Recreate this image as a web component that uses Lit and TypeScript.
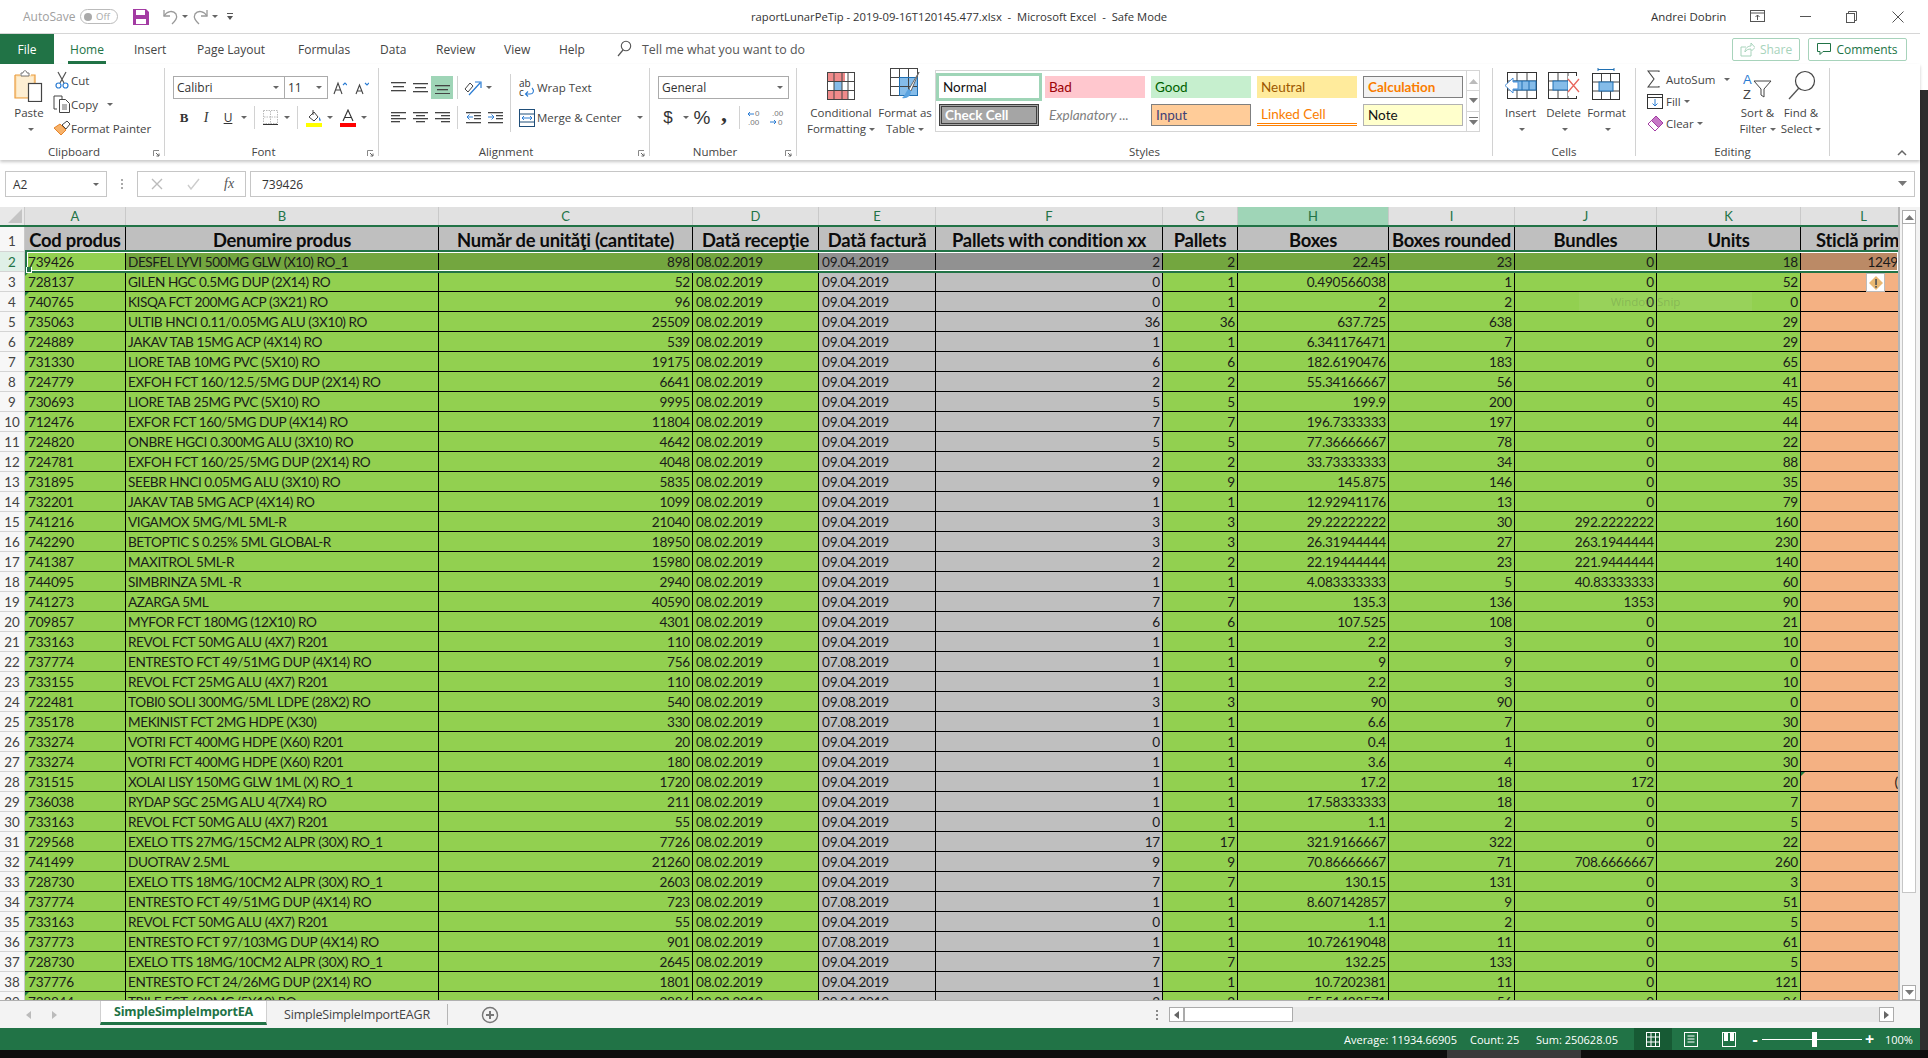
import { LitElement, html, css, svg } from "lit";
import { customElement } from "lit/decorators.js";

const ic = (w: number, h: number, body: unknown) =>
  html`<svg width=${w} height=${h} viewBox="0 0 ${w} ${h}" fill="none">${body}</svg>`;

const D = "#444";
const lines = (a: number[][]) =>
  a.map(([x1, x2, y]) => svg`<rect x=${x1} y=${y} width=${x2 - x1} height="1.3" fill=${D}/>`);

const I = {
  save: ic(18, 18, svg`<path d="M1 1h13l3 3v13H1z" fill="#a33ba3"/><rect x="4" y="2" width="9" height="5" fill="#fff"/><rect x="4" y="11" width="10" height="5" fill="#fff"/>`),
  undo: ic(17, 18, svg`<path d="M2 2v6h6" stroke="#999" stroke-width="1.3"/><path d="M2 8c3-5 9-6 12-2 2 4-1 7-4 10" stroke="#999" stroke-width="1.3"/>`),
  redo: ic(17, 18, svg`<path d="M15 2v6H9" stroke="#999" stroke-width="1.3"/><path d="M15 8C12 3 6 2 3 6c-2 4 1 7 4 10" stroke="#999" stroke-width="1.3"/>`),
  qat: ic(8, 10, svg`<rect x="1" y="1" width="6" height="1" fill="#555"/><path d="M1 4h6L4 8z" fill="#555"/>`),
  search: ic(16, 18, svg`<circle cx="10" cy="6" r="4.7" stroke="#555" stroke-width="1.1"/><path d="M7 10l-5 6" stroke="#555" stroke-width="1.2"/>`),
  display: ic(15, 13, svg`<rect x=".5" y=".5" width="14" height="11" stroke="#555"/><path d="M1 3h13" stroke="#555"/><path d="M7.5 10V5M5.5 7l2-2 2 2" stroke="#555"/>`),
  min: ic(11, 11, svg`<path d="M0 5.5h11" stroke="#555"/>`),
  restore: ic(11, 12, svg`<rect x=".5" y="2.5" width="8" height="9" stroke="#555"/><path d="M2.5 2.5v-2h8v9h-2" stroke="#555"/>`),
  close: ic(12, 12, svg`<path d="M.5.5l11 11M11.5.5l-11 11" stroke="#555"/>`),
  share: ic(15, 15, svg`<path d="M1 5h5M1 5v9h10v-4" stroke="#a7d3bb"/><path d="M5 10c0-4 3-6 6-6V1l4 4.500-4 4V7c-3 0-5 1-6 3z" stroke="#a7d3bb"/>`),
  comment: ic(14, 13, svg`<path d="M.5.5h13v8H6l-3 3v-3H.5z" stroke="#217346"/>`),
  paste: ic(30, 32, svg`<path d="M1 5h5M17 5h4v23H1V5" stroke="#ea9b3c" stroke-width="1.2" fill="#fde3b8"/><rect x="3" y="7" width="16" height="20" fill="#fdeed2"/><path d="M7 6V3h2c0-3 4-3 4 0h2v3z" fill="#fff" stroke="#777"/><rect x="14.500" y="13.500" width="13" height="18" fill="#fff" stroke="#444" stroke-width="1.2"/>`),
  cut: ic(14, 18, svg`<path d="M3 1l6 11M11 1L5 12" stroke="#555" stroke-width="1.2"/><circle cx="3.500" cy="14.500" r="2.500" stroke="#2b7cd3" stroke-width="1.2"/><circle cx="10.500" cy="14.500" r="2.500" stroke="#2b7cd3" stroke-width="1.2"/>`),
  copy: ic(18, 18, svg`<path d="M4 14H1V1h8v3" stroke="#444"/><path d="M6.500 4.500h6l4 4v9h-10z" fill="#fff" stroke="#444"/><path d="M9 10h5M9 12h5M9 14h5" stroke="#666"/>`),
  painter: ic(18, 16, svg`<path d="M1 8l6-4 6 6-5 5z" fill="#f7b26a" stroke="#e5842a"/><path d="M9 5l5-4 3 3-4 5z" fill="#fff" stroke="#444"/>`),
  grow: ic(14, 14, svg`<path d="M1 13L5 2l4 11M2.500 9h5" stroke="#444" stroke-width="1.1"/><path d="M10 4l2-2 2 2" stroke="#2b7cd3" stroke-width="1.1"/>`),
  shrink: ic(14, 14, svg`<path d="M1 13L4.500 4 8 13M2.500 10h4" stroke="#444" stroke-width="1.1"/><path d="M10 2l2 2 2-2" stroke="#2b7cd3" stroke-width="1.1"/>`),
  border: ic(16, 16, svg`<rect x=".5" y=".5" width="14" height="13" stroke="#bbb" stroke-dasharray="1.500 1"/><path d="M7.500 1v13M1 7h14" stroke="#bbb" stroke-dasharray="1.500 1"/><path d="M0 14.500h15" stroke="#333"/>`),
  fill: ic(16, 18, svg`<path d="M3 8l5-5 4 5-4 4z" fill="#fff" stroke="#444"/><path d="M7 1v5" stroke="#444"/><path d="M13 8c2 2 2 4 1 4s-1-2-1-4z" fill="#2b7cd3"/><rect y="14" width="16" height="4" fill="#ffff00"/>`),
  fontc: ic(16, 18, svg`<path d="M3 12L8 1l5 11M5 8.500h6" stroke="#333" stroke-width="1.1"/><rect y="14" width="16" height="4" fill="#ff0000"/>`),
  at: ic(15, 13, svg`${lines([[0, 15, 1], [2, 13, 5], [0, 15, 9]])}`),
  am: ic(15, 13, svg`${lines([[0, 15, 2], [2, 13, 6], [0, 15, 10]])}`),
  ab: ic(15, 13, svg`${lines([[0, 15, 4], [2, 13, 8], [0, 15, 12]])}`),
  orient: ic(18, 16, svg`<path d="M1 9l5-6 3 3-5 6z" stroke="#444"/><path d="M5 15L16 3M11 2h6v6" stroke="#2b7cd3" stroke-width="1.2"/>`),
  al: ic(15, 13, svg`${lines([[0, 15, 1], [0, 9, 4], [0, 15, 7], [0, 9, 10]])}`),
  ac: ic(15, 13, svg`${lines([[0, 15, 1], [3, 12, 4], [0, 15, 7], [3, 12, 10]])}`),
  ar: ic(15, 13, svg`${lines([[0, 15, 1], [6, 15, 4], [0, 15, 7], [6, 15, 10]])}`),
  ind1: ic(15, 13, svg`${lines([[0, 15, 1], [8, 15, 4], [8, 15, 7], [0, 15, 11]])}<path d="M7 6H1M3.500 3.500L1 6l2.500 2.500" stroke="#2b7cd3"/>`),
  ind2: ic(15, 13, svg`${lines([[0, 15, 1], [8, 15, 4], [8, 15, 7], [0, 15, 11]])}<path d="M0 6h6M3.500 3.500L6 6 3.500 8.500" stroke="#2b7cd3"/>`),
  wrapi: ic(16, 18, svg`<text x="0" y="8" font-size="10" fill="#333" font-family="Open Sans">ab</text><text x="0" y="17" font-size="10" fill="#333" font-family="Open Sans">c</text><path d="M13 9c3 3 1 6-2 6H7M9 12.500L6.500 15 9 17.500" stroke="#2b7cd3" stroke-width="1.1"/>`),
  merge: ic(16, 18, svg`<rect x=".5" y=".5" width="15" height="17" stroke="#1f4e79"/><path d="M1 5h14M1 13h14" stroke="#1f4e79"/><path d="M3 9h10M5 7L3 9l2 2M11 7l2 2-2 2" stroke="#2b7cd3"/>`),
  incd: ic(16, 18, svg`<path d="M7 5H1M3 3L1 5l2 2" stroke="#2b7cd3"/><text x="8" y="7" font-size="8" fill="#777" font-family="Liberation Sans">0</text><text x="1" y="16" font-size="8" fill="#777" font-family="Liberation Sans">.00</text>`),
  decd: ic(16, 18, svg`<text x="3" y="7" font-size="8" fill="#777" font-family="Liberation Sans">.00</text><path d="M1 13h6M5 11l2 2-2 2" stroke="#2b7cd3"/><text x="9" y="16" font-size="8" fill="#777" font-family="Liberation Sans">0</text>`),
  cond: ic(28, 28, svg`<rect x=".5" y=".5" width="27" height="27" stroke="#444" fill="#fff"/><rect x="1" y="1" width="17" height="8" fill="#f08a8a"/><rect x="1" y="19" width="20" height="8" fill="#f08a8a"/><rect x="7" y="10" width="8" height="8" fill="#85bce9"/><path d="M1 9.500h26M1 18.500h26M7 1v26M15 1v26M21 1v26" stroke="#444"/>`),
  table: ic(30, 32, svg`<rect x=".5" y=".5" width="27" height="27" stroke="#444" fill="#fff"/><rect x="9" y="9" width="18" height="18" fill="#85bce9"/><path d="M1 9.500h26M1 18.500h26M9.500 1v26M18.500 1v26" stroke="#444"/><rect x="9.500" y="9.500" width="18" height="18" stroke="#1f6fb2"/><path d="M29 4L19 21l2 2z" fill="#fff" stroke="#666"/><path d="M19 21c-3 1-3 6-7 9 5 1 9-2 9-7z" fill="#5ba3e0"/>`),
  insert: ic(33, 28, svg`<rect x="3.500" y=".5" width="29" height="26" fill="#fff" stroke="#333"/><path d="M13 1v26M23 1v26M4 9h28M4 18h28" stroke="#444"/><rect x="8" y="9" width="24" height="9" fill="#85bce9" stroke="#1f6fb2"/><path d="M18 9v9M25 9v9" stroke="#1f6fb2"/><path d="M9 6l-8 7.500 8 7.500v-4h5v-7H9z" fill="#fff" stroke="#4a90d9"/>`),
  del: ic(32, 28, svg`<rect x=".5" y=".5" width="28" height="26" fill="#fff" stroke="#333"/><path d="M10 1v26M20 1v26M1 9h28M1 18h28" stroke="#444"/><rect x="5" y="9" width="15" height="9" fill="#85bce9" stroke="#1f6fb2"/><rect x="20" y="4" width="12" height="20" fill="#fff"/><path d="M20 7l11 13M31 7L20 20" stroke="#e8685f" stroke-width="1.3"/>`),
  format: ic(29, 32, svg`<path d="M6 1.500h16M6 0v3M22 0v3" stroke="#1f6fb2"/><rect x=".5" y="5.500" width="27" height="26" fill="#fff" stroke="#333"/><path d="M9.500 6v25M18.500 6v25M1 14h27M1 23h27" stroke="#444"/><rect x="7" y="14" width="14" height="9" fill="#85bce9" stroke="#1f6fb2"/>`),
  sigma: ic(14, 18, svg`<path d="M12 2V1H1l6 8-6 8h11v-1" stroke="#444" stroke-width="1.1"/>`),
  filld: ic(16, 15, svg`<rect x=".5" y=".5" width="15" height="14" stroke="#333"/><path d="M1 3.500h14" stroke="#333"/><path d="M8 5v7M5.500 9.500L8 12l2.500-2.500" stroke="#2b7cd3"/>`),
  clear: ic(17, 17, svg`<path d="M1 9l8-8 7 7-8 8z" fill="#c678c6" stroke="#a33ba3"/><path d="M1 9l3.500-3.500 7 7L8 16z" fill="#fff" stroke="#a33ba3"/>`),
  sort: ic(30, 28, svg`<text x="0" y="12" font-size="13" fill="#2b7cd3" font-family="Liberation Sans">A</text><text x="0" y="27" font-size="13" fill="#444" font-family="Liberation Sans">Z</text><path d="M11 9h17l-7 8v8l-3-2v-6z" fill="#fff" stroke="#444"/>`),
  find: ic(31, 30, svg`<circle cx="19" cy="11" r="9.500" fill="#fff" stroke="#444" stroke-width="1.2"/><path d="M13 18L3 29" stroke="#555" stroke-width="1.3"/>`),
  launch: ic(7, 7, svg`<path d="M.5 6V.5H6" stroke="#888"/><path d="M3 3l3 3M6 3.500V6H3.500" stroke="#666"/>`),
  cx: ic(12, 12, svg`<path d="M1 1l10 10M11 1L1 11" stroke="#bbb" stroke-width="1.4"/>`),
  ck: ic(13, 12, svg`<path d="M1 7l3 4 8-10" stroke="#ccc" stroke-width="1.4"/>`),
  up: ic(9, 6, svg`<path d="M0 6l4.500-5L9 6z" fill="#777"/>`),
  upl: ic(9, 6, svg`<path d="M0 6l4.500-5L9 6z" fill="#bbb"/>`),
  dn: ic(9, 6, svg`<path d="M0 0l4.500 5L9 0z" fill="#777"/>`),
  plus: ic(18, 18, svg`<circle cx="9" cy="9" r="7.500" stroke="#777" stroke-width="1.4"/><path d="M5 9h8M9 5v8" stroke="#777" stroke-width="2"/>`),
  vnormal: ic(14, 15, svg`<rect x=".5" y=".5" width="13" height="14" stroke="#fff"/><path d="M5 1v13M9.500 1v13M1 5h12M1 10h12" stroke="#fff"/>`),
  vpage: ic(14, 15, svg`<rect x=".5" y=".5" width="13" height="14" stroke="#fff"/><path d="M3.500 4h7M3.500 7h7M3.500 10h7" stroke="#fff"/>`),
  vbreak: ic(14, 15, svg`<rect x=".5" y=".5" width="13" height="14" stroke="#fff"/><rect x="2" y="1" width="4" height="8" fill="#fff"/><rect x="8" y="1" width="4" height="8" fill="#fff"/>`),
  warn: ic(16, 16, svg`<path d="M8 1l7 7-7 7-7-7z" fill="#e9b872"/><rect x="7.200" y="4" width="1.700" height="6" fill="#555"/><rect x="7.200" y="11" width="1.700" height="1.700" fill="#555"/>`),
};

const caret = html`<span class="caret"></span>`;
const D1 = "08.02.2019", E1 = "09.04.2019", E2 = "07.08.2019", E3 = "09.08.2019";
type R = [string, string, string, string, string, string, string, string, string, string, string];
const rows: R[] = [
  ["739426", "DESFEL LYVI 500MG GLW (X10) RO_1", "898", E1, "2", "2", "22.45", "23", "0", "18", "1249"],
  ["728137", "GILEN HGC 0.5MG DUP (2X14) RO", "52", E1, "0", "1", "0.490566038", "1", "0", "52", ""],
  ["740765", "KISQA FCT 200MG ACP (3X21) RO", "96", E1, "0", "1", "2", "2", "0", "0", ""],
  ["735063", "ULTIB HNCI 0.11/0.05MG ALU (3X10) RO", "25509", E1, "36", "36", "637.725", "638", "0", "29", ""],
  ["724889", "JAKAV TAB 15MG ACP (4X14) RO", "539", E1, "1", "1", "6.341176471", "7", "0", "29", ""],
  ["731330", "LIORE TAB 10MG PVC (5X10) RO", "19175", E1, "6", "6", "182.6190476", "183", "0", "65", ""],
  ["724779", "EXFOH FCT 160/12.5/5MG DUP (2X14) RO", "6641", E1, "2", "2", "55.34166667", "56", "0", "41", ""],
  ["730693", "LIORE TAB 25MG PVC (5X10) RO", "9995", E1, "5", "5", "199.9", "200", "0", "45", ""],
  ["712476", "EXFOR FCT 160/5MG DUP (4X14) RO", "11804", E1, "7", "7", "196.7333333", "197", "0", "44", ""],
  ["724820", "ONBRE HGCI 0.300MG ALU (3X10) RO", "4642", E1, "5", "5", "77.36666667", "78", "0", "22", ""],
  ["724781", "EXFOH FCT 160/25/5MG DUP (2X14) RO", "4048", E1, "2", "2", "33.73333333", "34", "0", "88", ""],
  ["731895", "SEEBR HNCI 0.05MG ALU (3X10) RO", "5835", E1, "9", "9", "145.875", "146", "0", "35", ""],
  ["732201", "JAKAV TAB 5MG ACP (4X14) RO", "1099", E1, "1", "1", "12.92941176", "13", "0", "79", ""],
  ["741216", "VIGAMOX 5MG/ML 5ML-R", "21040", E1, "3", "3", "29.22222222", "30", "292.2222222", "160", ""],
  ["742290", "BETOPTIC S 0.25% 5ML GLOBAL-R", "18950", E1, "3", "3", "26.31944444", "27", "263.1944444", "230", ""],
  ["741387", "MAXITROL 5ML-R", "15980", E1, "2", "2", "22.19444444", "23", "221.9444444", "140", ""],
  ["744095", "SIMBRINZA 5ML -R", "2940", E1, "1", "1", "4.083333333", "5", "40.83333333", "60", ""],
  ["741273", "AZARGA 5ML", "40590", E1, "7", "7", "135.3", "136", "1353", "90", ""],
  ["709857", "MYFOR FCT 180MG (12X10) RO", "4301", E1, "6", "6", "107.525", "108", "0", "21", ""],
  ["733163", "REVOL FCT 50MG ALU (4X7) R201", "110", E1, "1", "1", "2.2", "3", "0", "10", ""],
  ["737774", "ENTRESTO FCT 49/51MG DUP (4X14) RO", "756", E2, "1", "1", "9", "9", "0", "0", ""],
  ["733155", "REVOL FCT 25MG ALU (4X7) R201", "110", E1, "1", "1", "2.2", "3", "0", "10", ""],
  ["722481", "TOBI0 SOLI 300MG/5ML LDPE (28X2) RO", "540", E3, "3", "3", "90", "90", "0", "0", ""],
  ["735178", "MEKINIST FCT 2MG HDPE (X30)", "330", E2, "1", "1", "6.6", "7", "0", "30", ""],
  ["733274", "VOTRI FCT 400MG HDPE (X60) R201", "20", E1, "0", "1", "0.4", "1", "0", "20", ""],
  ["733274", "VOTRI FCT 400MG HDPE (X60) R201", "180", E1, "1", "1", "3.6", "4", "0", "30", ""],
  ["731515", "XOLAI LISY 150MG GLW 1ML (X) RO_1", "1720", E1, "1", "1", "17.2", "18", "172", "20", "("],
  ["736038", "RYDAP SGC 25MG ALU 4(7X4) RO", "211", E1, "1", "1", "17.58333333", "18", "0", "7", ""],
  ["733163", "REVOL FCT 50MG ALU (4X7) R201", "55", E1, "0", "1", "1.1", "2", "0", "5", ""],
  ["729568", "EXELO TTS 27MG/15CM2 ALPR (30X) RO_1", "7726", E1, "17", "17", "321.9166667", "322", "0", "22", ""],
  ["741499", "DUOTRAV 2.5ML", "21260", E1, "9", "9", "70.86666667", "71", "708.6666667", "260", ""],
  ["728730", "EXELO TTS 18MG/10CM2 ALPR (30X) RO_1", "2603", E1, "7", "7", "130.15", "131", "0", "3", ""],
  ["737774", "ENTRESTO FCT 49/51MG DUP (4X14) RO", "723", E2, "1", "1", "8.607142857", "9", "0", "51", ""],
  ["733163", "REVOL FCT 50MG ALU (4X7) R201", "55", E1, "0", "1", "1.1", "2", "0", "5", ""],
  ["737773", "ENTRESTO FCT 97/103MG DUP (4X14) RO", "901", E2, "1", "1", "10.72619048", "11", "0", "61", ""],
  ["728730", "EXELO TTS 18MG/10CM2 ALPR (30X) RO_1", "2645", E1, "7", "7", "132.25", "133", "0", "5", ""],
  ["737776", "ENTRESTO FCT 24/26MG DUP (2X14) RO", "1801", E1, "1", "1", "10.7202381", "11", "0", "121", ""],
  ["738844", "TRILE FCT 600MG (5X10) RO", "2886", E1, "2", "2", "55.51428571", "56", "0", "86", ""],
];
const heads = ["Cod produs", "Denumire produs", "Număr de unităţi (cantitate)", "Dată recepţie", "Dată factură", "Pallets with condition xx", "Pallets", "Boxes", "Boxes rounded", "Bundles", "Units", "Sticlă prim"];
const letters = "ABCDEFGHIJKL".split("");

@customElement("app-root")
export class AppRoot extends LitElement {
  static styles = css`
    :host { display: block; width: 1928px; height: 1058px; overflow: hidden; background: #111;
      font-family: "Open Sans", "Noto Sans", sans-serif; font-size: 11.5px; color: #444; }
    * { box-sizing: border-box; }
    svg { display: block; flex: none; }
    .top { display: flex; height: 1050px; }
    .win { width: 1920px; height: 1050px; background: #fff; display: flex; flex-direction: column; }
    .strip { width: 8px; display: flex; flex-direction: column; }
    .strip i { display: block; height: 90px; background: #fff; }
    .strip b { display: block; flex: 1; background: #2e2e2e; }
    .task { height: 8px; background: #0e0e0e; display: flex; padding-left: 1447px; }
    .task i { width: 134px; background: #3a3a3a; display: block; }

    .title { height: 34px; display: flex; align-items: center; border-bottom: 1px solid #d6d6d6; padding-left: 23px; font-size: 12px; }
    .as { color: #a0a0a0; width: 57px; }
    .toggle { width: 38px; height: 15px; border: 1px solid #bbb; border-radius: 8px; display: flex; align-items: center; padding: 0 3px; gap: 4px; font-size: 9.5px; color: #aaa; margin-right: 14px; }
    .toggle i { width: 8px; height: 8px; border-radius: 50%; background: #aaa; display: block; }
    .qa { display: flex; align-items: center; width: 619px; }
    .qa .sv { margin-right: 12px; }
    .qa .cr { margin: 0 4px 0 3px; }
    .qa .cu { margin-left: 4px; }
    .tt { color: #333; font-size: 11.25px; white-space: pre; }
    .user { margin-left: auto; color: #333; font-size: 11.5px; width: 99px; }
    .wb { display: flex; align-items: center; gap: 35px; padding-right: 16px; }

    .tabs { height: 30px; display: flex; align-items: center; font-size: 12px; color: #444; flex: none; }
    .file { width: 54px; height: 30px; background: #217346; color: #fff; display: flex; align-items: center; justify-content: center; }
    .tab { height: 30px; display: flex; align-items: center; }
    .t1 { margin-left: 14px; width: 38px; justify-content: center; color: #217346; border-bottom: 3px solid #217346; padding-top: 3px; }
    .t2 { margin-left: 28px; width: 32px; }
    .t3 { margin-left: 31px; width: 71px; }
    .t4 { margin-left: 30px; width: 53px; }
    .t5 { margin-left: 29px; width: 27px; }
    .t6 { margin-left: 29px; width: 40px; }
    .t7 { margin-left: 28px; width: 27px; }
    .t8 { margin-left: 28px; width: 27px; }
    .srch { margin-left: 30px; margin-right: 10px; }
    .tell { color: #555; font-size: 12.4px; }
    .share, .comm { height: 23px; border: 1px solid #a7d3bb; border-radius: 2px; display: flex; align-items: center; justify-content: center; gap: 5px; font-size: 12px; }
    .share { margin-left: auto; width: 68px; color: #a7d3bb; margin-right: 8px; }
    .comm { width: 99px; color: #217346; margin-right: 13px; }

    .ribbon { height: 96px; display: flex; box-shadow: 0 2px 3px rgba(0,0,0,.22); padding-top: 4px; flex: none; position: relative; }
    .g { height: 88px; border-right: 1px solid #d2d2d2; display: flex; flex-direction: column; flex: none; }
    .g0 { width: 165px; } .g1 { width: 214px; } .g2 { width: 271px; } .g3 { width: 147px; }
    .g4 { width: 696px; } .g5 { width: 143px; } .g6 { width: 194px; }
    .body { flex: 1; display: flex; min-height: 0; }
    .lab { height: 12px; line-height: 16px; text-align: center; position: relative; color: #444; }
    .lab.l { padding-right: 16px; }
    .lab span { position: absolute; right: 4px; top: 6px; }
    .big { display: flex; flex-direction: column; align-items: center; line-height: 16px; flex: none; text-align: center; white-space: nowrap; }
    .big .ico { height: 37px; display: flex; align-items: flex-end; padding-bottom: 5px; }
    .caret { display: inline-block; width: 0; height: 0; border: 3px solid transparent; border-top: 3.5px solid #666; border-bottom: 0; vertical-align: middle; margin-left: 3px; flex: none; }
    .cc { justify-content: center; display: flex; height: 16px; align-items: center; }
    .small { display: flex; align-items: center; height: 24px; white-space: nowrap; }
    .small .si { width: 19px; flex: none; display: flex; justify-content: center; }
    .pc { width: 46px; margin-left: 6px; padding-top: 2px; }
    .pc .ico { height: 35px; align-items: flex-start; padding: 0; }
    .rows { display: flex; flex-direction: column; padding-top: 8px; gap: 7px; }
    .r { display: flex; align-items: center; height: 23px; }
    .t { width: 22px; height: 23px; display: flex; align-items: center; justify-content: center; flex: none; }
    .t.on { background: #9fd5b7; }
    .c { width: 10px; display: flex; justify-content: center; flex: none; }
    .c .caret { margin: 0; }
    .s { width: 1px; height: 23px; background: #d2d2d2; margin: 0 5px; flex: none; }
    .s4 { margin: 0 4px; }
    .pl8 { padding-left: 8px; }
    .box { height: 23px; border: 1px solid #ababab; display: flex; align-items: center; justify-content: space-between; padding: 0 5px 0 3px; background: #fff; font-size: 12px; color: #333; flex: none; }
    .b1 { width: 112px; } .b2 { width: 44px; margin-left: -1px; } .b3 { width: 131px; }
    .sz { width: 22px; height: 23px; display: flex; align-items: center; justify-content: center; margin-left: 1px; }
    .sz2 { margin-left: 0; }
    .bold { font-weight: 700; font-size: 13px; font-family: "Liberation Serif", serif; color: #333; }
    .it { font-style: italic; font-size: 14px; font-family: "Liberation Serif", serif; color: #333; }
    .un { text-decoration: underline; font-size: 12px; color: #333; }
    .ml2 { margin-left: 2px; }
    .alignL { width: 123px; }
    .vsep { width: 1px; height: 58px; background: #d2d2d2; margin-top: 6px; flex: none; }
    .alignR { padding-left: 8px; }
    .lbl { margin-left: 2px; font-size: 11.5px; white-space: nowrap; }
    .lblm { width: 97px; }
    .cash { font-size: 17px; color: #333; font-family: "Liberation Sans", sans-serif; }
    .pct { font-size: 19px; font-family: "Liberation Sans", sans-serif; color: #333; }
    .cma { font-size: 24px; font-weight: 700; font-family: "Liberation Serif", serif; line-height: 14px; color: #333; padding-bottom: 10px; }
    .cash-w { width: 20px; margin-right: 3px; }

    .bc { width: 70px; margin-left: 9px; }
    .bt { width: 58px; }
    .gal { margin: 2px 0 0 1px; width: 545px; height: 62px; border: 1px solid #d5d5d5; display: flex; flex: none; }
    .cells { display: grid; grid-template-columns: repeat(5, 106px); grid-template-rows: 22px 22px; row-gap: 6px; padding-top: 5px; width: 530px; font-family: Lato, sans-serif; font-size: 13.5px; }
    .st { margin: 0 3px; padding-left: 4px; display: flex; align-items: center; white-space: nowrap; overflow: hidden; }
    .normal { background: #fff; color: #111; outline: 3px solid #9fd5b7; }
    .bad { background: #ffc7ce; color: #9c0006; }
    .good { background: #c6efce; color: #006100; }
    .neutral { background: #ffeb9c; color: #9c5700; }
    .calc { background: #f2f2f2; border: 1px solid #7f7f7f; color: #fa7d00; font-weight: 700; }
    .check { background: #a5a5a5; color: #fff; font-weight: 700; border: 3px double #3f3f3f; padding-left: 3px; }
    .expl { color: #7f7f7f; font-style: italic; }
    .input { background: #ffcc99; color: #3f3f76; border: 1px solid #7f7f7f; }
    .link { color: #fa7d00; border-bottom: 3px double #ff8001; }
    .note { background: #ffffcc; color: #111; border: 1px solid #b2b2b2; }
    .gs { width: 14px; display: flex; flex-direction: column; border-left: 1px solid #d5d5d5; }
    .gs div { flex: 1; display: flex; align-items: center; justify-content: center; border-bottom: 1px solid #d5d5d5; }
    .gs div:last-child { border-bottom: 0; }
    .gs .ov { flex-direction: column; gap: 2px; }
    .gs .ov i { display: block; width: 9px; height: 1px; background: #777; }
    .bi { width: 43px; margin-left: 0; }
    .cellsb { padding-left: 6px; }
    .edit { width: 88px; margin-left: 11px; flex: none; }
    .edit .small { height: 22px; }
    .edit .si { width: 19px; justify-content: flex-start; }
    .bs { width: 45px; } .bf { width: 42px; }
    .coll { position: absolute; right: 13px; bottom: 4px; }

    .fbar { height: 26px; margin-top: 11px; display: flex; flex: none; padding-left: 5px; font-size: 12px; }
    .nm { width: 102px; border: 1px solid #c6c6c6; display: flex; align-items: center; justify-content: space-between; padding: 0 7px; color: #333; }
    .dots { width: 30px; display: flex; align-items: center; justify-content: center; color: #999; }
    .dots i { display: block; width: 2px; height: 11px; background: repeating-linear-gradient(#aaa 0 2px, transparent 2px 4px); }
    .fxb { width: 109px; border: 1px solid #c6c6c6; display: flex; align-items: center; padding-left: 13px; gap: 24px; }
    .fx { font-family: "Liberation Serif", serif; font-style: italic; color: #555; font-size: 14px; }
    .inp { width: 1665px; margin-left: 4px; border: 1px solid #c6c6c6; display: flex; align-items: center; justify-content: space-between; padding: 0 7px 0 11px; color: #333; }

    .sheet { height: 793px; margin-top: 10px; display: flex; position: relative; flex: none; overflow: hidden; }
    .grid { width: 1898px; height: 793px; overflow: hidden; flex: none; font-family: Lato, sans-serif; font-size: 13.6px; letter-spacing: -.25px; color: #1a1a1a; }
    .row { display: grid; grid-template-columns: 25px 101px 313px 254px 126px 117px 227px 75px 151px 126px 142px 144px 126px; grid-template-rows: 20px; width: 1952px; height: 20px; }
    .ch { height: 18px; grid-template-rows: 18px; }
    .hc { background: #e1e1e1; border-right: 1px solid #c9c9c9; text-align: center; color: #217346; line-height: 19px; font-size: 13px; letter-spacing: 0; overflow: hidden; }
    .hc.on { background: #9fd5b7; }
    .corner { background: #e8e8e8; position: relative; border-right: 1px solid #c9c9c9; }
    .corner::after { content: ""; position: absolute; right: 2px; bottom: 2px; border: 7px solid transparent; border-right-color: #c4c4c4; border-bottom-color: #c4c4c4; }
    .h1 { height: 27px; border-top: 2px solid #217346; grid-template-rows: 25px; }
    .h1 .ce { background: #bfbfbf; font-weight: 700; font-size: 18.4px; letter-spacing: -.25px; text-align: center; border-right: 1px solid #000; line-height: 26px; padding: 0; color: #0c0c0c; border-bottom: 2px solid #bfbfbf; }
    .h1 .ce.lh { padding-right: 12px; }
    .rh { background: #f7f7f7; border-bottom: 1px solid #d4d4d4; border-right: 1px solid #c9c9c9; text-align: center; color: #444; font-size: 13.4px; letter-spacing: 0; line-height: 20px; }
    .h1 .rh { line-height: 29px; }
    .rh.on { background: #dff0e7; color: #217346; }
    .ce { border-right: 1px solid #000; border-bottom: 1px solid #000; padding: 0 3px; line-height: 20px; white-space: nowrap; overflow: hidden; background: #92d050; position: relative; }
    .n { text-align: right; padding-right: 2px; }
    .nm2 { letter-spacing: -.42px; padding-left: 2px; }
    .x { background: #bfbfbf; }
    .o { background: #f4b183; border-right: 0; }
    .o.n { padding-right: 29px; }
    .tri::before { content: ""; position: absolute; left: 0; top: 0; border: 2.5px solid #1d7a3c; border-right-color: transparent; border-bottom-color: transparent; }
    .sel .ce { background: #73a63f; }
    .sel .ce.first { background: #92d050; }
    .sel .x { background: #919191; }
    .sel .o { background: #bb8a66; }
    .frame { position: absolute; left: 25px; top: 43px; width: 1873px; height: 23px; border: 2px solid #217346; border-right: 0; box-shadow: inset 0 0 0 1px #fff; }
    .handle { position: absolute; left: -1px; bottom: -2px; width: 6px; height: 6px; background: #217346; border: 1px solid #fff; border-top: 0; }
    .snip { position: absolute; left: 1579px; top: 85px; width: 173px; height: 19px; padding-right: 40px; background: rgba(255,255,255,.06); color: rgba(90,120,70,.3); font-size: 11.5px; text-align: center; line-height: 19px; font-family: "Open Sans", sans-serif; }
    .wtag { position: absolute; left: 1866px; top: 66px; width: 19px; height: 19px; background: #fff; border: 1px solid #bbb; display: flex; align-items: center; justify-content: center; }
    .vs { width: 22px; background: #f3f3f3; border-left: 2px solid #b5b5b5; padding-left: 2px; padding-top: 3px; display: flex; flex-direction: column; flex: none; }
    .ar { width: 14px; height: 14px; background: #fff; border: 1px solid #ababab; display: flex; align-items: center; justify-content: center; flex: none; }
    .thumb { width: 14px; height: 669px; background: #fff; border: 1px solid #c6c6c6; border-top: 0; flex: none; }
    .trk { flex: 1; }
    .ard { height: 15px; }

    .sb { height: 28px; display: flex; align-items: center; background: #f3f3f3; border-top: 1px solid #b0b0b0; flex: none; font-size: 13px; }
    .nav { width: 100px; display: flex; padding-left: 26px; gap: 21px; align-items: center; }
    .navb { border: 4px solid transparent; display: block; width: 0; }
    .nl { border-right: 5px solid #bbb; border-left: 0; }
    .nr { border-left: 5px solid #bbb; border-right: 0; }
    .st1 { width: 167px; height: 24px; background: #fff; border-bottom: 3px solid #217346; border-left: 1px solid #d0d0d0; border-right: 1px solid #d0d0d0; color: #217346; font-weight: 700; font-size: 12.5px; display: flex; align-items: center; justify-content: center; letter-spacing: -.2px; align-self: flex-start; }
    .st2 { width: 181px; height: 21px; border-right: 1px solid #b5b5b5; display: flex; align-items: center; justify-content: center; color: #444; font-size: 12.5px; letter-spacing: -.2px; }
    .pls { margin-left: 33px; }
    .hdots { margin-left: 646px; width: 24px; display: flex; justify-content: center; }
    .hdots i { display: block; width: 2px; height: 10px; background: repeating-linear-gradient(#888 0 2px, transparent 2px 4px); }
    .hs { display: flex; width: 725px; height: 15px; background: #e8e8e8; align-items: stretch; }
    .al2 { width: 15px; background: #fff; border: 1px solid #ababab; display: flex; align-items: center; justify-content: center; flex: none; }
    .htr { flex: none; width: 109px; background: #fff; border: 1px solid #ababab; }
    .hsp { flex: 1; }
    .tl { border: 4px solid transparent; border-right: 5px solid #666; border-left: 0; display: block; }
    .tr { border: 4px solid transparent; border-left: 5px solid #666; border-right: 0; display: block; }

    .status { height: 22px; background: #217346; color: #fff; display: flex; align-items: center; flex: none; font-size: 11px; padding-left: 1344px; }
    .status > * { flex: none; }
    .s1 { width: 126px; } .s2 { width: 66px; } .s3 { width: 98px; }
    .vb { width: 38px; height: 22px; display: flex; align-items: center; justify-content: center; }
    .vb.on { background: #175a34; }
    .zoom { display: flex; align-items: center; margin-left: 3px; }
    .zm { font-size: 16px; font-weight: 700; width: 8px; text-align: center; line-height: 22px; }
    .zt { width: 100px; height: 1px; background: #fff; margin: 0 3px; display: flex; align-items: center; padding-left: 50px; flex: none; }
    .zt i { display: block; width: 5px; height: 15px; background: #fff; flex: none; }
    .pc100 { margin-left: 12px; }
  `;

  render() {
    return html`
      <div class="top">
        <div class="win">
          ${this.titlebar()}
          ${this.tabs()}
          ${this.ribbon()}
          <div class="fbar">
            <div class="nm"><span>A2</span><span class="caret"></span></div>
            <div class="dots"><i></i></div>
            <div class="fxb">${I.cx}${I.ck}<span class="fx">fx</span></div>
            <div class="inp"><span>739426</span>${I.dn}</div>
          </div>
          ${this.sheet()}
          ${this.sheetbar()}
          ${this.status()}
        </div>
        <div class="strip"><i></i><b></b></div>
      </div>
      <div class="task"><i></i></div>
    `;
  }

  titlebar() {
    return html`<div class="title">
      <span class="as">AutoSave</span>
      <span class="toggle"><i></i>Off</span>
      <div class="qa">
        <span class="sv">${I.save}</span>${I.undo}<span class="caret cr"></span>${I.redo}<span class="caret cr"></span><span class="cu">${I.qat}</span>
      </div>
      <span class="tt">raportLunarPeTip - 2019-09-16T120145.477.xlsx  -  Microsoft Excel  -  Safe Mode</span>
      <span class="user">Andrei Dobrin</span>
      <div class="wb">${I.display}${I.min}${I.restore}${I.close}</div>
    </div>`;
  }

  tabs() {
    return html`<div class="tabs">
      <div class="file">File</div>
      <div class="tab t1">Home</div>
      <div class="tab t2">Insert</div>
      <div class="tab t3">Page Layout</div>
      <div class="tab t4">Formulas</div>
      <div class="tab t5">Data</div>
      <div class="tab t6">Review</div>
      <div class="tab t7">View</div>
      <div class="tab t8">Help</div>
      <span class="srch">${I.search}</span>
      <span class="tell">Tell me what you want to do</span>
      <div class="share">${I.share}Share</div>
      <div class="comm">${I.comment}Comments</div>
    </div>`;
  }

  label(t: string, launcher = false) {
    return html`<div class="lab ${launcher ? "l" : ""}">${t}${launcher ? html`<span>${I.launch}</span>` : ""}</div>`;
  }

  ribbon() {
    return html`<div class="ribbon">
      <div class="g g0">
        <div class="body">
          <div class="big pc"><div class="ico">${I.paste}</div>Paste<div class="cc">${caret}</div></div>
          <div>
            <div class="small"><span class="si">${I.cut}</span>Cut</div>
            <div class="small"><span class="si">${I.copy}</span>Copy&nbsp;&nbsp;${caret}</div>
            <div class="small"><span class="si">${I.painter}</span>Format Painter</div>
          </div>
        </div>
        ${this.label("Clipboard", true)}
      </div>
      <div class="g g1">
        <div class="body pl8"><div class="rows">
          <div class="r">
            <div class="box b1">Calibri${caret}</div><div class="box b2">11${caret}</div>
            <span class="sz">${I.grow}</span><span class="sz sz2">${I.shrink}</span>
          </div>
          <div class="r">
            <span class="t bold">B</span><span class="t it">I</span><span class="t un">U</span><span class="c">${caret}</span>
            <span class="s"></span>
            <span class="t">${I.border}</span><span class="c">${caret}</span>
            <span class="s"></span>
            <span class="t">${I.fill}</span><span class="c">${caret}</span>
            <span class="t ml2">${I.fontc}</span><span class="c">${caret}</span>
          </div>
        </div></div>
        ${this.label("Font", true)}
      </div>
      <div class="g g2">
        <div class="body pl8">
          <div class="rows alignL">
            <div class="r"><span class="t">${I.at}</span><span class="t">${I.am}</span><span class="t on">${I.ab}</span><span class="s s4"></span><span class="t">${I.orient}</span><span class="c">${caret}</span></div>
            <div class="r"><span class="t">${I.al}</span><span class="t">${I.ac}</span><span class="t">${I.ar}</span><span class="s s4"></span><span class="t">${I.ind1}</span><span class="t">${I.ind2}</span></div>
          </div>
          <div class="vsep"></div>
          <div class="rows alignR">
            <div class="r">${I.wrapi}<span class="lbl">Wrap Text</span></div>
            <div class="r">${I.merge}<span class="lbl lblm">Merge &amp; Center</span>${caret}</div>
          </div>
        </div>
        ${this.label("Alignment", true)}
      </div>
      <div class="g g3">
        <div class="body pl8"><div class="rows">
          <div class="r"><div class="box b3">General${caret}</div></div>
          <div class="r">
            <span class="t cash cash-w">$</span><span class="c">${caret}</span>
            <span class="t pct">%</span><span class="t cma">,</span>
            <span class="s s4"></span>
            <span class="t">${I.incd}</span><span class="t">${I.decd}</span>
          </div>
        </div></div>
        ${this.label("Number", true)}
      </div>
      <div class="g g4">
        <div class="body">
          <div class="big bc"><div class="ico">${I.cond}</div>Conditional<div class="cc">Formatting${caret}</div></div>
          <div class="big bt"><div class="ico">${I.table}</div>Format as<div class="cc">Table${caret}</div></div>
          <div class="gal">
            <div class="cells">
              <div class="st normal">Normal</div><div class="st bad">Bad</div><div class="st good">Good</div><div class="st neutral">Neutral</div><div class="st calc">Calculation</div>
              <div class="st check">Check Cell</div><div class="st expl">Explanatory ...</div><div class="st input">Input</div><div class="st link">Linked Cell</div><div class="st note">Note</div>
            </div>
            <div class="gs"><div>${I.upl}</div><div>${I.dn}</div><div class="ov"><i></i>${I.dn}</div></div>
          </div>
        </div>
        ${this.label("Styles")}
      </div>
      <div class="g g5">
        <div class="body cellsb">
          <div class="big bi"><div class="ico">${I.insert}</div>Insert<div class="cc">${caret}</div></div>
          <div class="big bi"><div class="ico">${I.del}</div>Delete<div class="cc">${caret}</div></div>
          <div class="big bi"><div class="ico">${I.format}</div>Format<div class="cc">${caret}</div></div>
        </div>
        ${this.label("Cells")}
      </div>
      <div class="g g6">
        <div class="body">
          <div class="edit">
            <div class="small"><span class="si">${I.sigma}</span>AutoSum&nbsp;&nbsp;${caret}</div>
            <div class="small"><span class="si">${I.filld}</span>Fill${caret}</div>
            <div class="small"><span class="si">${I.clear}</span>Clear${caret}</div>
          </div>
          <div class="big bs"><div class="ico">${I.sort}</div>Sort &amp;<div class="cc">Filter${caret}</div></div>
          <div class="big bf"><div class="ico">${I.find}</div>Find &amp;<div class="cc">Select${caret}</div></div>
        </div>
        ${this.label("Editing")}
      </div>
      <svg class="coll" width="10" height="7" viewBox="0 0 10 7"><path d="M1 6l4-4 4 4" stroke="#666" stroke-width="1.500" fill="none"/></svg>
    </div>`;
  }

  sheet() {
    const gridRow = (r: R, i: number) => {
      const sel = i === 0;
      return html`<div class="row ${sel ? "sel" : ""}">
        <div class="rh ${sel ? "on" : ""}">${i + 2}</div>
        <div class="ce tri first">${r[0]}</div>
        <div class="ce nm2">${r[1]}</div>
        <div class="ce n">${r[2]}</div>
        <div class="ce">${D1}</div>
        <div class="ce x">${r[3]}</div>
        <div class="ce x n">${r[4]}</div>
        <div class="ce n">${r[5]}</div>
        <div class="ce n">${r[6]}</div>
        <div class="ce n">${r[7]}</div>
        <div class="ce n">${r[8]}</div>
        <div class="ce n">${r[9]}</div>
        <div class="ce o n ${r[10] === "(" ? "tri" : ""}">${r[10]}</div>
      </div>`;
    };
    return html`<div class="sheet">
      <div class="grid">
        <div class="row ch">
          <div class="corner"></div>
          ${letters.map((l) => html`<div class="hc ${l === "H" ? "on" : ""}">${l}</div>`)}
        </div>
        <div class="row h1">
          <div class="rh">1</div>
          ${heads.map((h, i) => html`<div class="ce ${i === 11 ? "lh" : ""}">${h}</div>`)}
        </div>
        ${rows.map(gridRow)}
      </div>
      <div class="vs">
        <div class="ar">${I.up}</div>
        <div class="thumb"></div>
        <div class="trk"></div>
        <div class="ar ard">${I.dn}</div>
      </div>
      <div class="frame"><div class="handle"></div></div>
      <div class="snip">Window Snip</div>
      <div class="wtag">${I.warn}</div>
    </div>`;
  }

  sheetbar() {
    return html`<div class="sb">
      <div class="nav"><i class="navb nl"></i><i class="navb nr"></i></div>
      <div class="st1">SimpleSimpleImportEA</div>
      <div class="st2">SimpleSimpleImportEAGR</div>
      <span class="pls">${I.plus}</span>
      <span class="hdots"><i></i></span>
      <div class="hs">
        <div class="al2"><i class="tl"></i></div>
        <div class="htr"></div>
        <div class="hsp"></div>
        <div class="al2"><i class="tr"></i></div>
      </div>
    </div>`;
  }

  status() {
    return html`<div class="status">
      <span class="s1">Average: 11934.66905</span>
      <span class="s2">Count: 25</span>
      <span class="s3">Sum: 250628.05</span>
      <span class="vb on">${I.vnormal}</span>
      <span class="vb">${I.vpage}</span>
      <span class="vb">${I.vbreak}</span>
      <div class="zoom">
        <span class="zm">-</span><div class="zt"><i></i></div><span class="zm">+</span>
        <span class="pc100">100%</span>
      </div>
    </div>`;
  }
}
